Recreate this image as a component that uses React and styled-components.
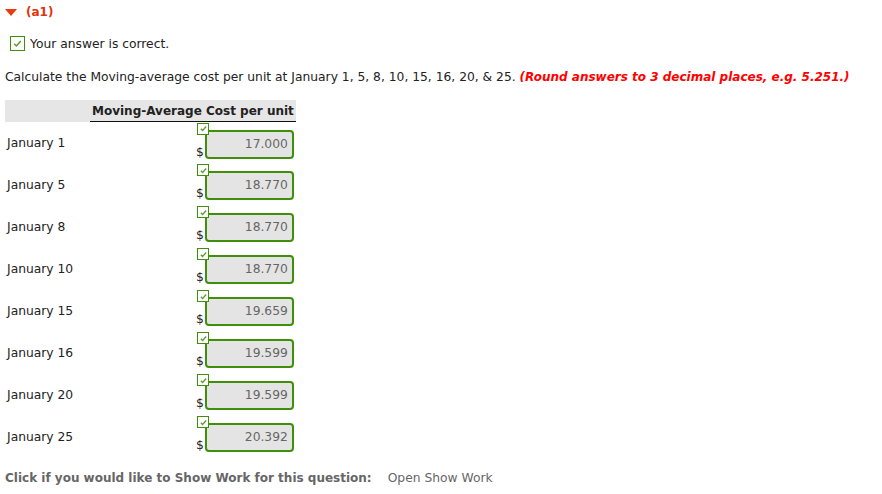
import React from "react";
import styled, { createGlobalStyle } from "styled-components";

const GlobalStyle = createGlobalStyle`
  body {
    margin: 0;
    background: #fff;
    font-family: "DejaVu Sans", Verdana, sans-serif;
    font-size: 12.3px;
    color: #222;
  }
  table {
    font-size: inherit;
  }
`;

const Page = styled.div`
  padding: 4px 5px 0 5px;
`;

const PartHeader = styled.div`
  display: flex;
  align-items: center;
  gap: 9px;
  height: 16px;
  color: #e0330c;
  font-weight: bold;
  font-size: 12px;
`;

const Triangle = styled.span`
  width: 0;
  height: 0;
  border-left: 6px solid transparent;
  border-right: 6px solid transparent;
  border-top: 7px solid #ea3a10;
`;

const Status = styled.div`
  display: flex;
  align-items: center;
  gap: 5px;
  margin: 16px 0 0 5px;
`;

const CheckBox = styled.span`
  display: inline-flex;
  align-items: center;
  justify-content: center;
  box-sizing: border-box;
  width: ${(p) => p.size}px;
  height: ${(p) => p.size}px;
  border: 1px solid #3f8f0a;
  background: #fff;
  position: relative;
  z-index: 1;
`;

const Instruction = styled.p`
  margin: 18px 0 0 0;
  line-height: 16px;
`;

const Hint = styled.em`
  color: #ff0000;
  font-weight: bold;
  font-size: 12px;
`;

const Table = styled.table`
  border-collapse: collapse;
  margin-top: 15px;
`;

const HeadCell = styled.th`
  background: #e6e6e6;
  height: 21px;
  padding: 0 2px;
  text-align: left;
  font-weight: bold;
  font-size: 12px;
  white-space: nowrap;
  width: ${(p) => p.w}px;
  border-bottom: ${(p) => (p.line ? "1px solid #111" : "none")};
`;

const LabelCell = styled.td`
  height: 42px;
  padding: 0 2px;
  vertical-align: middle;
`;

const ValueCell = styled.td`
  padding: 0 2px;
  text-align: right;
  vertical-align: top;
`;

const Answer = styled.div`
  display: inline-flex;
  flex-direction: column;
  align-items: flex-start;
  padding-left: 1px;
  margin-top: -2px;
`;

const AnswerLine = styled.div`
  display: flex;
  align-items: flex-end;
  gap: 1px;
  margin: -5px 0 0 -1px;
`;

const Dollar = styled.span`
  line-height: 12px;
  margin-bottom: 1px;
`;

const Input = styled.div`
  box-sizing: border-box;
  width: 89px;
  height: 29px;
  border: 2px solid #3f8f0a;
  border-radius: 4px;
  background: #e4e4e4;
  color: #666;
  text-align: right;
  padding: 0 4px;
  line-height: 25px;
`;

const Footer = styled.div`
  display: flex;
  gap: 16px;
  margin-top: 13px;
  color: #666;
`;

const FooterLabel = styled.span`
  font-weight: bold;
  font-size: 12px;
`;

const Check = ({ size }) => (
  <svg width={size} height={size} viewBox="0 0 10 10">
    <path d="M2 5.2 L4 7.2 L8 2.8" fill="none" stroke="#5aa02c" strokeWidth="1.4" />
  </svg>
);

const rows = [
  ["January 1", "17.000"],
  ["January 5", "18.770"],
  ["January 8", "18.770"],
  ["January 10", "18.770"],
  ["January 15", "19.659"],
  ["January 16", "19.599"],
  ["January 20", "19.599"],
  ["January 25", "20.392"],
];

export default function App() {
  return (
    <Page>
      <GlobalStyle />
      <PartHeader>
        <Triangle />
        (a1)
      </PartHeader>
      <Status>
        <CheckBox size={15}>
          <Check size={11} />
        </CheckBox>
        Your answer is correct.
      </Status>
      <Instruction>
        Calculate the Moving-average cost per unit at January 1, 5, 8, 10, 15, 16, 20, &amp; 25.{" "}
        <Hint>(Round answers to 3 decimal places, e.g. 5.251.)</Hint>
      </Instruction>
      <Table>
        <thead>
          <tr>
            <HeadCell w={81} />
            <HeadCell w={201} line>
              Moving-Average Cost per unit
            </HeadCell>
          </tr>
        </thead>
        <tbody>
          {rows.map(([label, value]) => (
            <tr key={label}>
              <LabelCell>{label}</LabelCell>
              <ValueCell>
                <Answer>
                  <CheckBox size={12}>
                    <Check size={9} />
                  </CheckBox>
                  <AnswerLine>
                    <Dollar>$</Dollar>
                    <Input>{value}</Input>
                  </AnswerLine>
                </Answer>
              </ValueCell>
            </tr>
          ))}
        </tbody>
      </Table>
      <Footer>
        <FooterLabel>Click if you would like to Show Work for this question:</FooterLabel>
        <span>Open Show Work</span>
      </Footer>
    </Page>
  );
}
